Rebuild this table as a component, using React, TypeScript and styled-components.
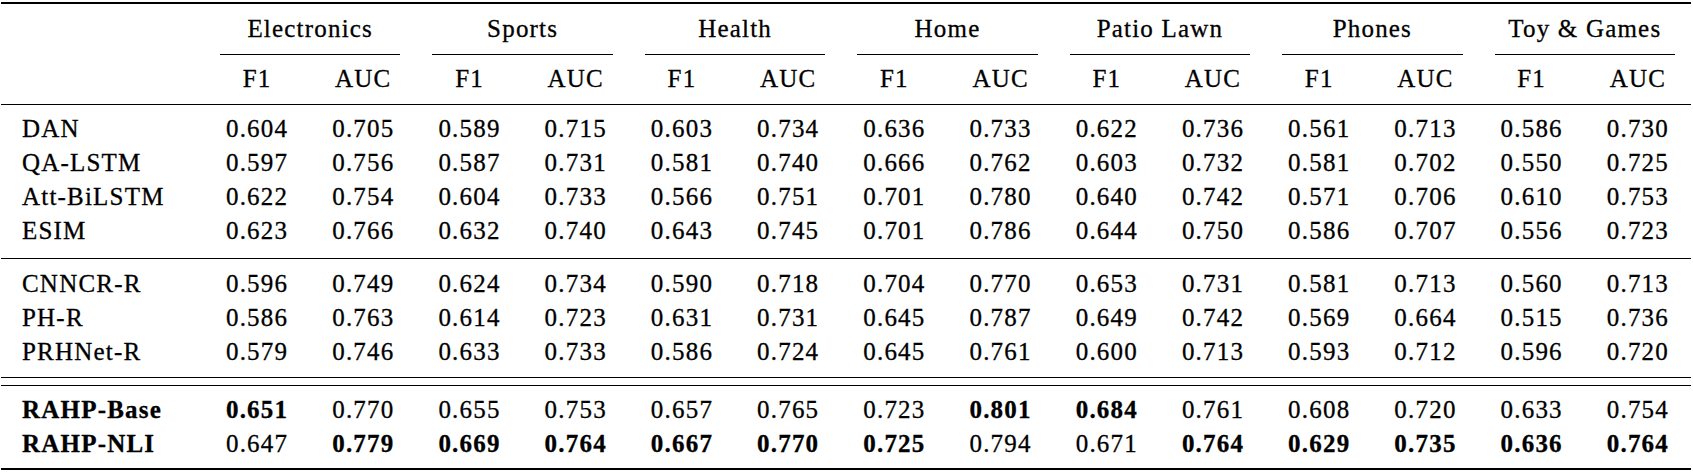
import { FC } from 'react';
import styled, { createGlobalStyle } from 'styled-components';

const GlobalStyle = createGlobalStyle`
  html, body {
    margin: 0;
    padding: 0;
    background: #fff;
  }
`;

const COLUMNS = '203px repeat(14, minmax(0, 1fr))';

const Sheet = styled.div`
  width: 1690px;
  margin: 2px 0 0 1px;
  border-top: 2px solid #000;
  border-bottom: 2px solid #000;
  font-family: 'Liberation Serif', 'Times New Roman', serif;
  font-size: 25px;
  letter-spacing: 1.2px;
  color: #000;
  -webkit-text-stroke: 0.3px #000;
`;

const Section = styled.div<{ $top: number; $bottom: number; $ruleTop?: boolean; $ruleBottom?: boolean; $gap?: number }>`
  display: grid;
  grid-template-columns: ${COLUMNS};
  margin-top: ${(p) => p.$gap ?? 0}px;
  padding: ${(p) => p.$top}px 0 ${(p) => p.$bottom}px;
  border-top: ${(p) => (p.$ruleTop ? '1px solid #000' : 'none')};
  border-bottom: ${(p) => (p.$ruleBottom ? '1px solid #000' : 'none')};
`;

const Cell = styled.div<{ $bold?: boolean }>`
  height: 34px;
  line-height: 34px;
  text-align: center;
  white-space: nowrap;
  font-weight: ${(p) => (p.$bold ? 700 : 400)};
`;

const Label = styled(Cell)`
  text-align: left;
  padding-left: 21px;
`;

const GroupHead = styled.div`
  grid-column: span 2;
  display: flex;
  flex-direction: column;
`;

// cmidrule(lr) under each dataset name
const GroupRule = styled.div`
  margin: 8px 16px 0;
  height: 1px;
  background: #000;
`;

interface Row {
  name: string;
  values: string[];
  bold?: number[];
}

const datasets = ['Electronics', 'Sports', 'Health', 'Home', 'Patio Lawn', 'Phones', 'Toy & Games'];

const baselines: Row[] = [
  { name: 'DAN', values: ['0.604', '0.705', '0.589', '0.715', '0.603', '0.734', '0.636', '0.733', '0.622', '0.736', '0.561', '0.713', '0.586', '0.730'] },
  { name: 'QA-LSTM', values: ['0.597', '0.756', '0.587', '0.731', '0.581', '0.740', '0.666', '0.762', '0.603', '0.732', '0.581', '0.702', '0.550', '0.725'] },
  { name: 'Att-BiLSTM', values: ['0.622', '0.754', '0.604', '0.733', '0.566', '0.751', '0.701', '0.780', '0.640', '0.742', '0.571', '0.706', '0.610', '0.753'] },
  { name: 'ESIM', values: ['0.623', '0.766', '0.632', '0.740', '0.643', '0.745', '0.701', '0.786', '0.644', '0.750', '0.586', '0.707', '0.556', '0.723'] },
];

const reviewModels: Row[] = [
  { name: 'CNNCR-R', values: ['0.596', '0.749', '0.624', '0.734', '0.590', '0.718', '0.704', '0.770', '0.653', '0.731', '0.581', '0.713', '0.560', '0.713'] },
  { name: 'PH-R', values: ['0.586', '0.763', '0.614', '0.723', '0.631', '0.731', '0.645', '0.787', '0.649', '0.742', '0.569', '0.664', '0.515', '0.736'] },
  { name: 'PRHNet-R', values: ['0.579', '0.746', '0.633', '0.733', '0.586', '0.724', '0.645', '0.761', '0.600', '0.713', '0.593', '0.712', '0.596', '0.720'] },
];

const ours: Row[] = [
  {
    name: 'RAHP-Base',
    values: ['0.651', '0.770', '0.655', '0.753', '0.657', '0.765', '0.723', '0.801', '0.684', '0.761', '0.608', '0.720', '0.633', '0.754'],
    bold: [0, 7, 8],
  },
  {
    name: 'RAHP-NLI',
    values: ['0.647', '0.779', '0.669', '0.764', '0.667', '0.770', '0.725', '0.794', '0.671', '0.764', '0.629', '0.735', '0.636', '0.764'],
    bold: [1, 2, 3, 4, 5, 6, 9, 10, 11, 12, 13],
  },
];

const Rows: FC<{ rows: Row[]; boldName?: boolean }> = ({ rows, boldName }) => (
  <>
    {rows.map((row) => [
      <Label key={row.name} $bold={boldName}>
        {row.name}
      </Label>,
      ...row.values.map((v, i) => (
        <Cell key={`${row.name}-${i}`} $bold={row.bold?.includes(i)}>
          {v}
        </Cell>
      )),
    ])}
  </>
);

const App: FC = () => (
  <>
    <GlobalStyle />
    <Sheet>
      {/* Dataset names */}
      <Section $top={8} $bottom={0}>
        <div />
        {datasets.map((d) => (
          <GroupHead key={d}>
            <Cell>{d}</Cell>
            <GroupRule />
          </GroupHead>
        ))}
      </Section>

      {/* Metric names */}
      <Section $top={7} $bottom={8} $ruleBottom>
        <div />
        {datasets.map((d) => [
          <Cell key={`${d}-f1`}>F1</Cell>,
          <Cell key={`${d}-auc`}>AUC</Cell>,
        ])}
      </Section>

      <Section $top={7} $bottom={10} $ruleBottom>
        <Rows rows={baselines} />
      </Section>

      <Section $top={8} $bottom={8} $ruleBottom>
        <Rows rows={reviewModels} />
      </Section>

      <Section $gap={7} $top={7} $bottom={7} $ruleTop>
        <Rows rows={ours} boldName />
      </Section>
    </Sheet>
  </>
);

export default App;
